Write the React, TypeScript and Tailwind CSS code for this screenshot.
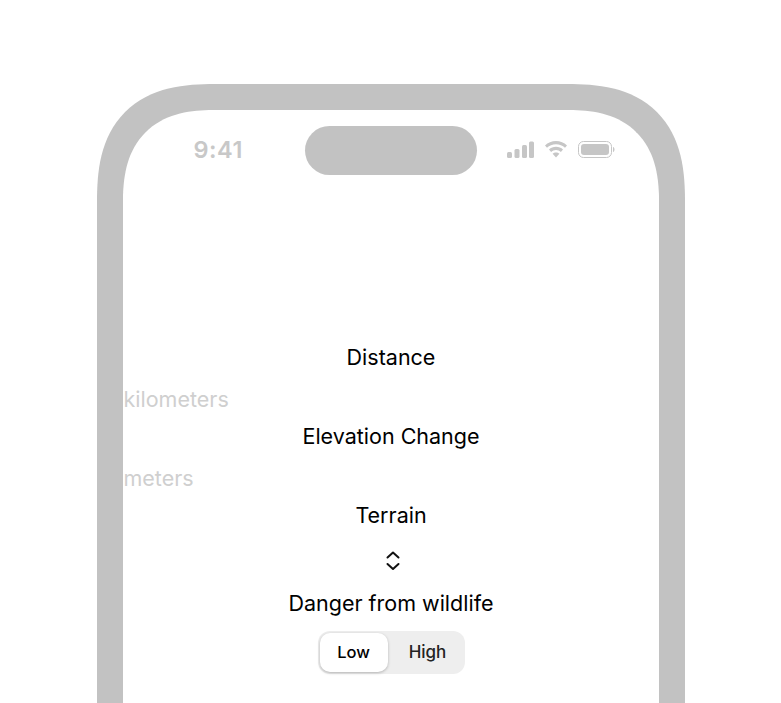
export default function App() {
  return (
    <div className="h-[703px] w-full overflow-hidden bg-white pt-[84px] font-['Inter',sans-serif]">
      <div className="mx-auto h-[800px] w-[588px] rounded-t-[118px] border-[26px] border-b-0 border-[#c2c2c2] bg-white [corner-shape:superellipse(1.35)]">
        <div className="flex h-full flex-col">
          <div className="flex h-[65px] items-start pl-[71px] pr-[44px] pt-[16px]">
            <span className="w-[111px] text-[23.5px] font-semibold leading-[30px] text-[#c8c8c8] tracking-[0.5px] mt-[9px]">9:41</span>
            <div className="h-[49px] w-[172px] shrink-0 rounded-[25px] bg-[#c2c2c2]" />
            <svg className="ml-[30px] mt-[15px]" width="108" height="20" viewBox="0 0 108 20" fill="#c6c6c6">
              <rect x="0" y="11" width="5" height="6" rx="1.5" />
              <rect x="7.500" y="8" width="5" height="9" rx="1.5" />
              <rect x="15" y="4" width="5" height="13" rx="1.5" />
              <rect x="22" y="0.500" width="5" height="16.500" rx="1.5" />
              <path d="M49 0c4.200 0 8.200 1.700 11 4.400l-2 2.300C55.700 4.500 52.500 3.200 49 3.200S42.300 4.500 40 6.700l-2-2.300C40.800 1.700 44.800 0 49 0z" />
              <path d="M49 5.800c2.700 0 5.200 1 7 2.800l-2.100 2.300c-1.300-1.200-3-2-4.900-2s-3.600.8-4.900 2L42 8.600c1.800-1.800 4.300-2.800 7-2.800z" />
              <path d="M49 11.500c1.300 0 2.500.5 3.400 1.300L49 16.600l-3.400-3.800c.9-.8 2.100-1.300 3.400-1.300z" />
              <rect x="71.500" y="0.500" width="33" height="16" rx="5" fill="none" stroke="#c6c6c6" strokeWidth="1" />
              <rect x="74" y="3" width="28" height="11" rx="3" />
              <path d="M106 6v5c1-.3 1.500-1.300 1.500-2.500S107 6.300 106 6z" />
            </svg>
          </div>
          <div className="flex flex-col pl-[1px] pt-[167px]">
            <Row label="Distance" unit="kilometers" />
            <Row label="Elevation Change" unit="meters" />
            <div className="flex flex-col items-center">
              <div className="text-[21.5px] leading-[30px] text-black">Terrain</div>
              <svg className="mt-[19px] ml-[3px]" width="16" height="24" viewBox="0 0 16 24" fill="none" stroke="#111" strokeWidth="2" strokeLinecap="round" strokeLinejoin="round">
                <path d="M2.500 8.500 8 3.500l5.500 5" />
                <path d="M2.500 15 8 20l5.500-5" />
              </svg>
              <div className="mt-[15px] text-[21.5px] leading-[30px] text-black">Danger from wildlife</div>
              <div className="mt-[13px] flex h-[43px] w-[147px] items-center rounded-[12px] bg-[#eeeeee] p-[2px] text-[17px] font-medium">
                <div className="flex h-full w-[68px] items-center justify-center rounded-[10px] bg-white text-[16.5px] font-medium text-black shadow-[0_1px_3px_rgba(0,0,0,0.25)]">Low</div>
                <div className="flex h-full flex-1 items-center justify-center pl-[5px] text-[#222]">High</div>
              </div>
            </div>
          </div>
        </div>
      </div>
    </div>
  );
}

function Row({ label, unit }: { label: string; unit: string }) {
  return (
    <div className="flex h-[79px] flex-col">
      <div className="text-center text-[21.5px] leading-[30px] text-black">{label}</div>
      <div className="mt-[12px] text-[21.5px] leading-[30px] text-[#cfcfcf]">{unit}</div>
    </div>
  );
}
